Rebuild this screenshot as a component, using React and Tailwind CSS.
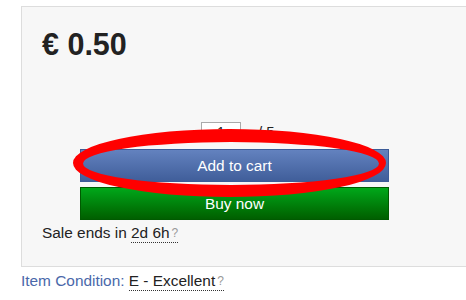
import React from "react";

const Help = () => (
  <sup className="text-[12px] text-[#999] ml-[2px] relative top-[-1px]">?</sup>
);

const App = () => {
  return (
    <div
      className="relative w-[466px] h-[300px] bg-white overflow-hidden pt-[6px] text-[15.4px] text-[#222]"
      style={{ fontFamily: '"Liberation Sans", Arial, sans-serif' }}
    >
      <div className="ml-[21px] h-[261px] border border-r-0 border-[#dddddd] bg-[#f7f7f7] pl-[20px]">
        <div className="mt-[20px] h-[34px] leading-[34px] text-[30.5px] font-bold text-[#222]">
          € 0.50
        </div>

        <div className="mt-[61px] flex items-center h-[20px] pl-[159px]">
          <input
            defaultValue="1"
            className="w-[40px] h-[20px] border border-[#aaaaaa] bg-white text-center text-[14px] text-[#222] outline-none"
          />
          <span className="ml-[17px] text-[15px] text-[#222]">/ 5</span>
        </div>

        <div className="ml-[38px] w-[309px] mt-[7px] flex flex-col gap-[5px]">
          <button className="h-[33px] w-full border border-[#3d5c98] bg-gradient-to-b from-[#6382bf] to-[#405e9a] text-[15.4px] text-white">
            Add to cart
          </button>
          <button className="h-[33px] w-full border border-[#005a00] bg-gradient-to-b from-[#00a81a] to-[#005f00] text-[15.4px] text-white">
            Buy now
          </button>
        </div>

        <div className="mt-[3px] leading-[20px]">
          Sale ends in{" "}
          <span className="border-b border-dotted border-[#333] pb-[1px]">
            2d 6h
            <Help />
          </span>
        </div>
      </div>

      <div className="ml-[21px] mt-[4px] leading-[20px]">
        <span className="text-[#4a68aa]">Item Condition:</span>{" "}
        <span className="border-b border-dotted border-[#333] pb-[1px]">
          E - Excellent
          <Help />
        </span>
      </div>

      <svg
        className="absolute left-0 top-0 pointer-events-none"
        width="466"
        height="300"
        viewBox="0 0 466 300"
      >
        <path
          fill="#ff0000"
          fillRule="evenodd"
          d="M73 163 A156.5 34 0 1 0 386 163 A156.5 34 0 1 0 73 163 Z M83 163.5 A148 21.5 0 1 0 379 163.5 A148 21.5 0 1 0 83 163.5 Z"
        />
      </svg>
    </div>
  );
};

export default App;
